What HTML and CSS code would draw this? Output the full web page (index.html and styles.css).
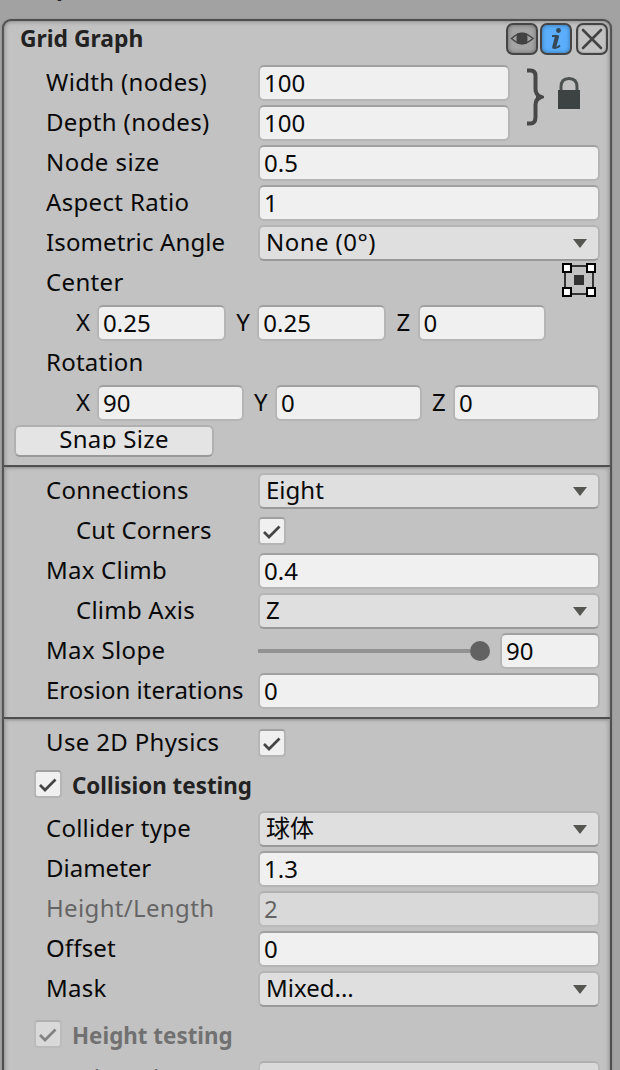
FILE: index.html
```html
<!DOCTYPE html>
<html lang="en">
<head>
<meta charset="utf-8">
<title>Grid Graph</title>
<link rel="stylesheet" href="styles.css">
</head>
<body>
<div class="outer-title"><span>Graphs</span></div>
<main class="panel">
  <section class="section first">
    <header class="head">
      <h1 class="t-grid">Grid Graph</h1>
      <div class="tools">
        <button class="tool"><svg width="28" height="28" viewBox="2 2 28 28"><path d="M5.500 15.500Q16 5.500 27 15.500Q16 25.500 5.500 15.500Z" fill="none" stroke="#484848" stroke-width="1.500"/><path d="M11 10.500Q16 8.500 21 10.500Q22 15.500 21 20.500Q16 22.500 11 20.500Q10 15.500 11 10.500Z" fill="#424242"/></svg></button>
        <button class="tool active"><svg width="28" height="28" viewBox="2 2 28 28"><circle cx="18.500" cy="7.500" r="2.400" fill="#364957"/><path d="M12 13H17.500M20 22.500Q16 26.500 12.500 24.500" fill="none" stroke="#364957" stroke-width="1.800"/><path d="M17.300 12.200L14 25" stroke="#364957" stroke-width="4"/></svg></button>
        <button class="tool close"><svg width="28" height="28" viewBox="2 2 28 28"><path d="M7 7L25 25M25 7L7 25" stroke="#444" stroke-width="2.600" stroke-linecap="round"/></svg></button>
      </div>
    </header>
    <div class="dims">
      <div class="dim-rows">
        <div class="row"><label class="ls35">Width (nodes)</label><div class="field">100</div></div>
        <div class="row"><label class="ls35">Depth (nodes)</label><div class="field">100</div></div>
      </div>
      <svg class="brace" width="18" height="60" viewBox="0 0 18 60"><path d="M1 3.500H4.500Q9.500 3.500 9.500 9V22Q9.500 28 15 30Q9.500 32 9.500 38V50Q9.500 56.500 4.500 56.500H1" fill="none" stroke="#484848" stroke-width="4"/><path d="M10 26L17 30L10 34Z" fill="#484848"/></svg>
      <svg class="lock" width="24" height="34" viewBox="0 0 24 34"><path d="M4 16V11Q4 2.500 12 2.500Q20 2.500 20 11V16" fill="none" stroke="#4c5250" stroke-width="3"/><rect x="1" y="14" width="22" height="19" fill="#3d4342"/></svg>
    </div>
    <div class="row"><label class="ls45">Node size</label><div class="field">0.5</div></div>
    <div class="row"><label class="ls35">Aspect Ratio</label><div class="field">1</div></div>
    <div class="row"><label class="ls15">Isometric Angle</label><div class="select"><span class="ls45">None (0°)</span></div></div>
    <div class="row center-row"><label class="ls35">Center</label>
      <svg class="pivot" width="34" height="34" viewBox="0 0 34 34"><rect x="3" y="3" width="28" height="28" fill="none" stroke="#333" stroke-width="2"/><rect x="12" y="12" width="10" height="10" fill="#333"/><g fill="#fff" stroke="#000" stroke-width="2"><rect x="1" y="1" width="8" height="8"/><rect x="25" y="1" width="8" height="8"/><rect x="1" y="25" width="8" height="8"/><rect x="25" y="25" width="8" height="8"/></g></svg>
    </div>
    <div class="row vector narrow"><span>X</span><div class="field">0.25</div><span>Y</span><div class="field">0.25</div><span>Z</span><div class="field">0</div></div>
    <div class="row"><label class="ls25">Rotation</label></div>
    <div class="row vector wide"><span>X</span><div class="field">90</div><span>Y</span><div class="field">0</div><span>Z</span><div class="field">0</div></div>
    <button class="snap"><span class="ls35">Snap Size</span></button>
  </section>
  <section class="section second">
    <div class="row"><label class="ls25">Connections</label><div class="select"><span>Eight</span></div></div>
    <div class="row"><label class="indent ls15">Cut Corners</label><div class="check"><svg width="24" height="24" viewBox="2 2 24 24"><path d="M6 15L11 20L21.500 9.500" fill="none" stroke="#444" stroke-width="2.700"/></svg></div></div>
    <div class="row"><label class="ls25">Max Climb</label><div class="field">0.4</div></div>
    <div class="row"><label class="indent ls25">Climb Axis</label><div class="select"><span>Z</span></div></div>
    <div class="row"><label class="ls35">Max Slope</label><div class="slider"><i class="track"></i><i class="knob"></i></div><div class="field short">90</div></div>
    <div class="row"><label>Erosion iterations</label><div class="field">0</div></div>
  </section>
  <section class="section third">
    <div class="row"><label class="ls35">Use 2D Physics</label><div class="check"><svg width="24" height="24" viewBox="2 2 24 24"><path d="M6 15L11 20L21.500 9.500" fill="none" stroke="#444" stroke-width="2.700"/></svg></div></div>
    <div class="group"><div class="check"><svg width="24" height="24" viewBox="2 2 24 24"><path d="M6 15L11 20L21.500 9.500" fill="none" stroke="#444" stroke-width="2.700"/></svg></div><h2>Collision testing</h2></div>
    <div class="row"><label class="ls25">Collider type</label><div class="select"><span>球体</span></div></div>
    <div class="row"><label>Diameter</label><div class="field">1.3</div></div>
    <div class="row off"><label class="ls35">Height/Length</label><div class="field">2</div></div>
    <div class="row"><label class="ls15">Offset</label><div class="field">0</div></div>
    <div class="row"><label class="ls25">Mask</label><div class="select"><span>Mixed...</span></div></div>
    <div class="group off last"><div class="check"><svg width="24" height="24" viewBox="2 2 24 24"><path d="M6 15L11 20L21.500 9.500" fill="none" stroke="#444" stroke-width="2.700"/></svg></div><h2>Height testing</h2></div>
    <div class="row off"><label class="ls25">Ray length</label><div class="field"></div></div>
  </section>
</main>
</body>
</html>
```
FILE: styles.css
```css
* { box-sizing: border-box; }
html, body { height: 1070px; overflow: hidden; }
body {
  margin: 0;
  background: #a2a2a2;
  color: #090909;
  font: 24px/32px "Noto Sans", "Open Sans", "Noto Sans CJK SC", sans-serif;
  white-space: nowrap;
}
h1, h2 {
  margin: 0; font-size: 24px; line-height: 32px; color: #222; font-weight: 700;
  transform: scaleX(.932); transform-origin: 0 0;
}
h1 { transform: scaleX(.953); }
button { font: inherit; color: inherit; padding: 0; }
svg { display: block; flex: none; }
.outer-title { height: 19px; padding-left: 16px; font-weight: 700; color: #222; display: flex; align-items: flex-start; }
.outer-title span { margin-top: -30px; transform: scaleX(.953); transform-origin: 0 0; }
.ls15 { letter-spacing: .13px; }
.ls25 { letter-spacing: .23px; }
.ls35 { letter-spacing: .34px; }
.ls45 { letter-spacing: .45px; }
.panel {
  width: 610px;
  height: 1080px;
  margin-left: 2px;
  background: #c2c2c2;
  border: 2px solid #4e4e4e;
  border-radius: 9px 9px 0 0;
  box-shadow: inset 0 0 5px #777, 0 0 2px #888;
}
.section { border-bottom: 2px solid #4e4e4e; box-shadow: 0 2px 3px -1px #888; }
.first { height: 446px; }
.second { height: 252px; padding-top: 4px; }
.third { height: 400px; padding-top: 4px; border: 0; box-shadow: none; }
.head { height: 42px; display: flex; justify-content: space-between; padding: 1px 2px 0 16px; }
.tools { display: flex; gap: 2px; padding-top: 1px; }
.tool {
  width: 32px; height: 32px;
  border: 2px solid #444; border-radius: 7px;
  background: #a4a4a4;
  box-shadow: inset 0 0 4px #666;
  display: grid; place-items: center;
}
.active { background: #5baefc; box-shadow: inset 0 0 4px #35709f; }
.close { background: #c2c2c2; box-shadow: inset 0 0 2px #777; margin-left: 2px; }
.row { height: 40px; display: flex; align-items: center; padding-left: 42px; }
.row label { width: 212px; flex: none; margin-top: -3px; }
.row label.indent { padding-left: 30px; }
.field, .select {
  width: 342px; height: 36px;
  border: 2px solid #b5b5b5; border-radius: 6px;
  padding-left: 4px; line-height: 31px;
}
.field { background: #f0f0f0; border-top-color: #a0a0a0; }
.select {
  background: #dfdfdf; border-bottom-color: #999;
  padding: 0 11px 0 6px;
  display: flex; justify-content: space-between; align-items: center;
}
.select span { margin-top: -3px; }
.select::after { content: ""; border: 7.500px solid transparent; border-top: 9px solid #565650; border-bottom: 0; }
.dims { display: flex; }
.dim-rows .field { width: 252px; }
.brace { margin: 4px 0 0 16px; }
.lock { margin: 13px 0 0 13px; }
.center-row { justify-content: space-between; padding-right: 14px; }
.pivot { margin-top: -6px; }
.vector { padding-left: 72px; }
.vector span { width: 21px; flex: none; margin-top: -3px; }
.vector .field + span { margin-left: 10.500px; }
.narrow .field { width: 128.800px; }
.wide .field { width: 146.500px; }
.snap {
  width: 200px; height: 32px; margin: 2px 0 0 10px;
  border: 2px solid #b0b0b0; border-bottom-color: #999; border-radius: 6px;
  background: #e4e4e4; display: block;
}
.snap span { display: block; height: 22px; line-height: 24px; margin-top: -6px; overflow: hidden; }
.check { width: 28px; height: 28px; border: 2px solid #b5b5b5; border-top-color: #a0a0a0; border-radius: 4px; background: #f0f0f0; flex: none; }
.slider { width: 232px; display: flex; align-items: center; }
.track { width: 212px; height: 4px; background: #929292; }
.knob { width: 20px; height: 20px; border-radius: 50%; background: #626262; }
.short { width: 100px; margin-left: 10px; }
.group { height: 46px; display: flex; padding: 7px 0 0 30px; gap: 10px; }
.group h2 { margin-top: -1px; }
.group.last { height: 50px; padding-top: 11px; }
.off { opacity: .5; }
```
